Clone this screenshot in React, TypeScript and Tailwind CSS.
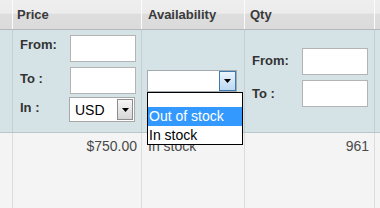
import React from 'react';

function ArrowButton({ hot }: { hot?: boolean }) {
  return (
    <span
      className={
        hot
          ? 'flex h-[20px] w-[17px] items-center justify-center border border-[#3d7bad] bg-[linear-gradient(#eaf4fd,#bcd8f3)]'
          : 'flex h-[21px] w-[16px] items-center justify-center border border-[#8c8c8c] bg-[linear-gradient(#f5f5f5,#d6d6d6)]'
      }
    >
      <svg width="7" height="4" viewBox="0 0 7 4">
        <path d="M0 0h7L3.5 4z" fill="#000" />
      </svg>
    </span>
  );
}

function Field({ label, top }: { label: string; top: string }) {
  return (
    <div className="flex items-start">
      <span className={`w-[50px] text-[13px] font-bold leading-[15px] text-[#333] ${top}`}>{label}</span>
      <span className="block h-[27px] w-[66px] border border-[#b4b4b4] bg-white" />
    </div>
  );
}

export default function App() {
  return (
    <div className="relative h-[208px] w-[380px] overflow-hidden bg-[#f4f4f4] font-['Liberation_Sans',Arial,sans-serif]">
      {/* header */}
      <div className="flex h-[30px] border-b border-[#b7b7b7] bg-[linear-gradient(#eeeeee_0%,#ececec_45%,#dddddd_50%,#dbdbdb_100%)] text-[13px] font-bold leading-[29px] text-[#3a3a3a]">
        <div className="w-[12px]" />
        <div className="w-[129px] border-l border-[#fbfbfb] pl-[4px]">Price</div>
        <div className="w-[103px] border-l border-[#fbfbfb] pl-[6px]">Availability</div>
        <div className="w-[130px] border-l border-[#fbfbfb] pl-[5px]">Qty</div>
        <div className="flex-1 border-l border-[#fbfbfb]" />
      </div>

      {/* filters */}
      <div className="flex h-[103px] border-b border-[#b9c7ca] bg-[#d6e3e6]">
        <div className="w-[12px]" />
        <div className="flex w-[129px] flex-col border-l border-[#c2d0d3] pl-[7px] pt-[5px]">
          <Field label="From:" top="pt-[2px]" />
          <div className="h-[5px]" />
          <Field label="To :" top="pt-[4px]" />
          <div className="h-[3px]" />
          <div className="flex items-start">
            <span className="w-[49px] pt-[3px] text-[13px] font-bold leading-[15px] text-[#333]">In :</span>
            <span className="flex h-[25px] w-[66px] items-center border border-[#a8a8a8] bg-white">
              <span className="flex-1 pl-[5px] text-[14px] leading-[16px] text-black">USD</span>
              <span className="mr-[1px]">
                <ArrowButton />
              </span>
            </span>
          </div>
        </div>
        <div className="w-[103px] border-l border-[#c2d0d3] pl-[5px] pt-[40px]">
          <span className="flex h-[22px] w-[90px] items-center justify-end border border-[#a3abb1] bg-white">
            <ArrowButton hot />
          </span>
        </div>
        <div className="flex w-[130px] flex-col border-l border-[#c2d0d3] pl-[7px] pt-[18px]">
          <Field label="From:" top="pt-[5px]" />
          <div className="h-[5px]" />
          <Field label="To :" top="pt-[6px]" />
        </div>
        <div className="flex-1 border-l border-[#c2d0d3]" />
      </div>

      {/* data row */}
      <div className="flex h-[75px] text-[14px] leading-[16px] text-[#4a4a4a]">
        <div className="w-[12px]" />
        <div className="w-[129px] border-l border-[#dcdcdc] pr-[4px] pt-[5px] text-right">$750.00</div>
        <div className="w-[103px] border-l border-[#dcdcdc] pl-[6px] pt-[5px]">In stock</div>
        <div className="w-[130px] border-l border-[#dcdcdc] pr-[5px] pt-[5px] text-right">961</div>
        <div className="flex-1 border-l border-[#dcdcdc]" />
      </div>

      {/* open select list */}
      <div className="absolute left-[147px] top-[92px] w-[96px] border border-black bg-white text-[14px] text-black">
        <div className="h-[14px]" />
        <div className="h-[19px] bg-[#3399ff] pl-[1px] leading-[19px] text-white">Out of stock</div>
        <div className="h-[18px] pl-[1px] leading-[18px]">In stock</div>
      </div>
    </div>
  );
}
